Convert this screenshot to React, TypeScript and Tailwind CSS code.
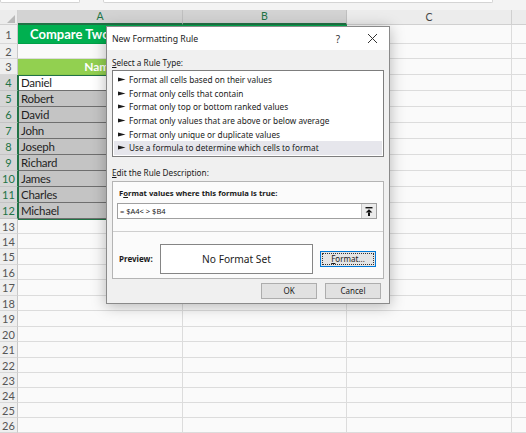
import React from "react";

const cellFont = { fontFamily: "Lato, 'Liberation Sans', sans-serif" };

const names = ["Daniel", "Robert", "David", "John", "Joseph", "Richard", "James", "Charles", "Michael"];

const rowHeights: number[] = [19, 15, 16, 16, 16, 16, 16, 16, 16, 16, 16, 16, 15, 15, 16, 15, 16, 15, 16, 15, 16, 15, 15, 15, 15, 15];

function hClass(h: number) {
  if (h === 19) return "h-[19px]";
  if (h === 16) return "h-[16px]";
  return "h-[15px]";
}

function Row({ n, h }: { n: number; h: number }) {
  const selected = n >= 4 && n <= 12;
  const hc = hClass(h);
  const header = (
    <div
      className={`w-[18px] shrink-0 ${hc} flex items-center justify-center text-[11px] leading-none border-b border-r ${
        selected
          ? "bg-[#d6d6d6] text-[#217346] border-b-[#c4c4c4] border-r-[#217346]"
          : "bg-[#efefef] text-[#555] border-b-[#d8d8d8] border-r-[#c8c8c8]"
      }`}
    >
      {n}
    </div>
  );
  let ab: React.ReactNode;
  if (n === 1) {
    ab = (
      <div className={`w-[329px] shrink-0 ${hc} bg-[#00b050] border-b border-r border-[#00a048] flex items-center pl-[12px] text-white font-bold text-[13px] leading-none`}>
        Compare Two Columns
      </div>
    );
  } else if (n === 3) {
    ab = (
      <>
        <div className={`w-[165px] shrink-0 ${hc} bg-[#92d050] border-b border-r border-[#8cc84a] flex items-center justify-center text-white font-bold text-[12px] leading-none`}>
          Name
        </div>
        <div className={`w-[164px] shrink-0 ${hc} bg-[#92d050] border-b border-r border-[#8cc84a]`} />
      </>
    );
  } else if (selected) {
    const i = n - 4;
    const bg = n === 4 ? "bg-white" : "bg-[#c4c4c4]";
    ab = (
      <>
        <div className={`w-[165px] shrink-0 ${hc} ${bg} border-b border-r border-[#6f6f6f] flex items-center pl-[3px] text-[#1f1f1f] text-[11.5px] leading-none tracking-[-0.25px]`}>
          {names[i]}
        </div>
        <div className={`w-[164px] shrink-0 ${hc} ${bg} border-b border-r border-[#6f6f6f]`} />
      </>
    );
  } else {
    ab = (
      <>
        <div className={`w-[165px] shrink-0 ${hc} bg-[#fafafa] border-b border-r border-[#dcdcdc]`} />
        <div className={`w-[164px] shrink-0 ${hc} bg-[#fafafa] border-b border-r border-[#dcdcdc]`} />
      </>
    );
  }
  return (
    <div className="flex">
      {header}
      {ab}
      <div className={`w-[165px] shrink-0 ${hc} bg-[#fafafa] border-b border-r border-[#dcdcdc]`} />
      <div className={`flex-1 ${hc} bg-[#fafafa] border-b border-[#dcdcdc]`} />
    </div>
  );
}

function ArrowMark() {
  return (
    <svg width="8" height="5" viewBox="0 0 8 5" className="shrink-0">
      <polygon points="0,0.6 7.5,2.5 0,4.4" fill="#1a1a1a" />
    </svg>
  );
}

const ruleTypes = [
  "Format all cells based on their values",
  "Format only cells that contain",
  "Format only top or bottom ranked values",
  "Format only values that are above or below average",
  "Format only unique or duplicate values",
  "Use a formula to determine which cells to format",
];

function Dialog() {
  return (
    <div
      className="absolute left-[106px] top-[26px] w-[284px] h-[278px] border border-[#8a8a8a] bg-[#f0f0f0] shadow-[0_2px_14px_rgba(0,0,0,0.28)] flex flex-col text-[#1a1a1a]"
      style={{ fontFamily: "'Noto Sans', 'Open Sans', sans-serif" }}
    >
      <div className="h-[23px] bg-white flex items-center pl-[5px] shrink-0">
        <span className="text-[8.7px] leading-[12px]">New Formatting Rule</span>
        <span className="ml-auto mr-[27px] text-[10px] leading-[12px] text-[#333]">?</span>
        <svg width="11" height="11" viewBox="0 0 11 11" className="mr-[11px]">
          <path d="M1 1 L10 10 M10 1 L1 10" stroke="#333" strokeWidth="1" />
        </svg>
      </div>
      <div className="flex-1 flex flex-col px-[5px]">
        <div className="mt-[7px] h-[12px] leading-[12px] text-[8.2px]">
          <span className="underline">S</span>elect a Rule Type:
        </div>
        <div className="mt-[1px] h-[87px] border border-[#7d7d7d] bg-white pt-[2px] px-[1px]">
          {ruleTypes.map((t, i) => (
            <div
              key={t}
              className={`h-[13.6px] flex items-center gap-[3px] pl-[4px] text-[8.25px] leading-[11px] ${i === 5 ? "bg-[#e6e6ec]" : ""}`}
            >
              <ArrowMark />
              <span>{t}</span>
            </div>
          ))}
        </div>
        <div className="mt-[10px] h-[12px] leading-[12px] text-[8.2px]">
          <span className="underline">E</span>dit the Rule Description:
        </div>
        <div className="mt-[2px] h-[98px] border border-[#b4b4b4] bg-[#fbfbfb] flex flex-col">
          <div className="pt-[5px] pl-[6px] h-[17px] leading-[12px] text-[7.7px] font-bold">
            F<span className="underline">o</span>rmat values where this formula is true:
          </div>
          <div className="mt-[4px] mx-[4px] mr-[6px] h-[16px] border border-[#a0a0a0] bg-white flex items-center">
            <span className="pl-[2px] text-[7.5px] leading-[10px]">= $A4&lt; &gt; $B4</span>
            <div className="ml-auto w-[15px] h-[14px] bg-[#ececec] border-l border-[#c8c8c8] flex items-center justify-center">
              <svg width="8" height="9" viewBox="0 0 8 9">
                <rect x="0.5" y="0" width="7" height="1.4" fill="#111" />
                <polygon points="4,2.2 0.6,5.6 7.4,5.6" fill="#111" />
                <rect x="3" y="5.5" width="2" height="3.5" fill="#111" />
              </svg>
            </div>
          </div>
          <div className="mt-[12px] h-px bg-[#cfcfcf]" />
          <div className="flex items-center mt-[12px] pl-[6px]">
            <span className="w-[41px] text-[8px] leading-[12px] font-bold">Preview:</span>
            <div className="w-[153px] h-[30px] border border-[#858585] bg-white flex items-center justify-center text-[10.2px] leading-[14px]">
              No Format Set
            </div>
            <div className="ml-[7px] w-[56px] h-[16px] border border-[#0078d7] bg-[#e5e5e5] p-[1px]">
              <div className="w-full h-full border border-dotted border-[#333] flex items-center justify-center text-[8px] leading-[10px]">
                <span>
                  <span className="underline">F</span>ormat...
                </span>
              </div>
            </div>
          </div>
        </div>
        <div className="mt-[4px] flex justify-end gap-[8px] pr-[3px]">
          <div className="w-[56px] h-[16px] border border-[#adadad] bg-[#e1e1e1] flex items-center justify-center text-[8px] leading-[10px]">OK</div>
          <div className="w-[56px] h-[16px] border border-[#adadad] bg-[#e1e1e1] flex items-center justify-center text-[8px] leading-[10px]">Cancel</div>
        </div>
      </div>
    </div>
  );
}

export default function App() {
  return (
    <div className="relative w-[526px] h-[433px] overflow-hidden bg-[#fafafa]" style={cellFont}>
      <div className="h-[10px] bg-[#f3f3f3] flex items-start">
        <div className="w-[80px] h-[3px] bg-white border-x border-b border-[#d4d4d4] rounded-b-[2px]" />
        <div className="ml-[23px] w-[390px] h-[3px] bg-white border-x border-b border-[#d4d4d4] rounded-b-[2px]" />
      </div>
      <div className="flex h-[15px]">
        <div className="w-[18px] shrink-0 bg-[#ececec] border-r border-b border-[#d0d0d0] relative">
          <svg width="8" height="8" viewBox="0 0 8 8" className="absolute right-[2px] bottom-[1px]">
            <polygon points="8,0 8,8 0,8" fill="#b9b9b9" />
          </svg>
        </div>
        <div className="w-[165px] shrink-0 bg-[#d3d3d3] border-r border-[#c0c0c0] border-b-2 border-b-[#217346] flex items-center justify-center text-[10.5px] leading-none text-[#217346]">
          A
        </div>
        <div className="w-[164px] shrink-0 bg-[#d3d3d3] border-r border-[#c0c0c0] border-b-2 border-b-[#217346] flex items-center justify-center text-[10.5px] leading-none text-[#217346]">
          B
        </div>
        <div className="w-[165px] shrink-0 bg-[#ececec] border-r border-b border-[#d0d0d0] flex items-center justify-center text-[10.5px] leading-none text-[#444]">
          C
        </div>
        <div className="flex-1 bg-[#ececec] border-b border-[#d0d0d0]" />
      </div>
      {rowHeights.map((h, i) => (
        <Row key={i} n={i + 1} h={h} />
      ))}
      <div className="absolute left-[18px] top-[75px] w-[330px] h-[145px] border border-[#217346] pointer-events-none" />
      <Dialog />
    </div>
  );
}
